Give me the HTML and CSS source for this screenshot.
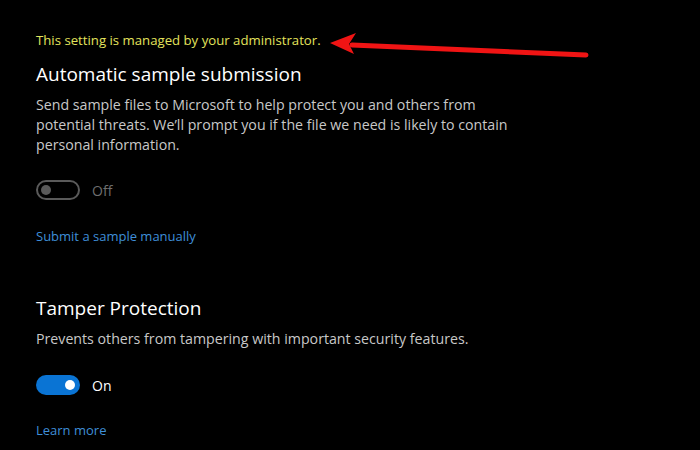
FILE: index.html
```html
<!DOCTYPE html>
<html lang="en">

<head>
  <meta charset="UTF-8">
  <title>Virus &amp; threat protection settings</title>
  <link rel="stylesheet" href="styles.css">
</head>

<body>
  <div class="page-wrapper">
    <p class="managed">This setting is managed by your administrator.</p>

    <section class="setting">
      <h2>Automatic sample submission</h2>
      <p class="desc">Send sample files to Microsoft to help protect you and others from potential threats. We’ll prompt you if the file we need is likely to contain personal information.</p>
      <div class="toggle-row">
        <span class="toggle off"><span class="knob"></span></span>
        <span class="toggle-label off">Off</span>
      </div>
      <a class="link" href="#">Submit a sample manually</a>
    </section>

    <section class="setting tamper">
      <h2>Tamper Protection</h2>
      <p class="desc">Prevents others from tampering with important security features.</p>
      <div class="toggle-row">
        <span class="toggle on"><span class="knob"></span></span>
        <span class="toggle-label">On</span>
      </div>
      <a class="link" href="#">Learn more</a>
    </section>

    <!-- annotation arrow drawn over the screenshot -->
    <svg class="arrow" width="280" height="30" viewBox="0 0 280 30">
      <line x1="24" y1="15" x2="258" y2="25" stroke="#f01414" stroke-width="5" stroke-linecap="round" />
      <polygon points="2,13 28,3 21,14 26,24" fill="#f01414" />
    </svg>
  </div>
</body>

</html>
```

FILE: styles.css
```css
* {
  margin: 0;
  padding: 0;
  box-sizing: border-box;
  font-family: "Open Sans", "Noto Sans", sans-serif;
}

html,
body {
  height: 100%;
  width: 100%;
  background: #000;
}

.page-wrapper {
  position: relative;
  width: 100%;
  height: 100%;
  padding: 30px 36px 0;
  color: #fff;
}

.managed {
  font-size: 13.2px;
  line-height: 20px;
  color: #e3e35c;
}

.setting h2 {
  font-size: 19px;
  font-weight: 400;
  line-height: 28px;
  margin-top: 10px;
}

.desc {
  font-size: 14.2px;
  line-height: 20px;
  color: #c8c8c8;
  margin-top: 7px;
  max-width: 480px;
}

.toggle-row {
  display: flex;
  align-items: center;
  gap: 12px;
  margin-top: 25px;
}

.toggle {
  display: flex;
  align-items: center;
  width: 44px;
  height: 20px;
  border-radius: 10px;
  padding: 0 5px;
}

.toggle .knob {
  width: 10px;
  height: 10px;
  border-radius: 50%;
}

.toggle.off {
  border: 2px solid #5a5a5a;
  padding: 0 3px;
}

.toggle.off .knob {
  background: #5a5a5a;
}

.toggle.on {
  background: #0a74d4;
  justify-content: flex-end;
}

.toggle.on .knob {
  background: #fff;
}

.toggle-label {
  font-size: 14px;
  color: #fff;
}

.toggle-label.off {
  color: #6e6e6e;
}

.link {
  display: block;
  margin-top: 26px;
  font-size: 13px;
  line-height: 20px;
  color: #3f8fd8;
  text-decoration: none;
}

.tamper {
  margin-top: 48px;
}

.tamper .desc {
  margin-top: 7px;
}

.tamper .toggle-row {
  margin-top: 26px;
}

.tamper .link {
  margin-top: 25px;
}

.arrow {
  position: absolute;
  left: 328px;
  top: 30px;
}
```
